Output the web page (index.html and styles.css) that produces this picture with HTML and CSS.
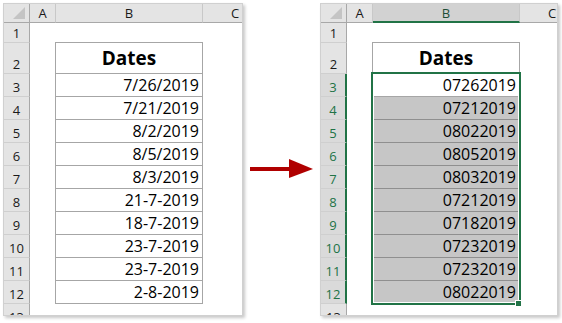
FILE: index.html
```html
<!DOCTYPE html>
<html>
<head>
<meta charset="utf-8">
<link rel="stylesheet" href="styles.css">
</head>
<body>
<div class="stage">
  <div class="sheet left">
    <div class="corner"><svg width="25" height="18" viewBox="0 0 25 18"><polygon points="21,3 21,15 9,15" fill="#c4c4c4"/></svg></div>
    <div class="ch">A</div>
    <div class="ch">B</div>
    <div class="ch chc"><span>C</span></div>

    <div class="rh">1</div><div class="c"></div><div class="c"></div><div class="c"></div>
    <div class="rh">2</div><div class="c"></div><div class="c t top head">Dates</div><div class="c"></div>
    <div class="rh">3</div><div class="c"></div><div class="c t">7/26/2019</div><div class="c"></div>
    <div class="rh">4</div><div class="c"></div><div class="c t">7/21/2019</div><div class="c"></div>
    <div class="rh">5</div><div class="c"></div><div class="c t">8/2/2019</div><div class="c"></div>
    <div class="rh">6</div><div class="c"></div><div class="c t">8/5/2019</div><div class="c"></div>
    <div class="rh">7</div><div class="c"></div><div class="c t">8/3/2019</div><div class="c"></div>
    <div class="rh">8</div><div class="c"></div><div class="c t">21-7-2019</div><div class="c"></div>
    <div class="rh">9</div><div class="c"></div><div class="c t">18-7-2019</div><div class="c"></div>
    <div class="rh">10</div><div class="c"></div><div class="c t">23-7-2019</div><div class="c"></div>
    <div class="rh">11</div><div class="c"></div><div class="c t">23-7-2019</div><div class="c"></div>
    <div class="rh">12</div><div class="c"></div><div class="c t">2-8-2019</div><div class="c"></div>
    <div class="rh">13</div><div class="c"></div><div class="c"></div><div class="c"></div>
  </div>

  <div class="arrow-wrap">
    <svg width="64" height="20" viewBox="0 0 64 20"><rect x="0" y="8" width="42" height="4" fill="#b00000"/><polygon points="39,0 63,10 39,19" fill="#b00000"/></svg>
  </div>

  <div class="sheet right">
    <div class="corner"><svg width="25" height="18" viewBox="0 0 25 18"><polygon points="21,3 21,15 9,15" fill="#c4c4c4"/></svg></div>
    <div class="ch">A</div>
    <div class="ch sel-col">B</div>
    <div class="ch chc"><span>C</span></div>

    <div class="rh">1</div><div class="c"></div><div class="c"></div><div class="c"></div>
    <div class="rh">2</div><div class="c"></div><div class="c t top head">Dates</div><div class="c"></div>
    <div class="rh sel-row">3</div><div class="c"></div><div class="c t">07262019</div><div class="c"></div>
    <div class="rh sel-row">4</div><div class="c"></div><div class="c t g">07212019</div><div class="c"></div>
    <div class="rh sel-row">5</div><div class="c"></div><div class="c t g">08022019</div><div class="c"></div>
    <div class="rh sel-row">6</div><div class="c"></div><div class="c t g">08052019</div><div class="c"></div>
    <div class="rh sel-row">7</div><div class="c"></div><div class="c t g">08032019</div><div class="c"></div>
    <div class="rh sel-row">8</div><div class="c"></div><div class="c t g">07212019</div><div class="c"></div>
    <div class="rh sel-row">9</div><div class="c"></div><div class="c t g">07182019</div><div class="c"></div>
    <div class="rh sel-row">10</div><div class="c"></div><div class="c t g">07232019</div><div class="c"></div>
    <div class="rh sel-row">11</div><div class="c"></div><div class="c t g">07232019</div><div class="c"></div>
    <div class="rh sel-row">12</div><div class="c"></div><div class="c t g">08022019</div><div class="c"></div>
    <div class="rh">13</div><div class="c"></div><div class="c"></div><div class="c"></div>

    <div class="selection"><div class="handle"></div></div>
  </div>
</div>
</body>
</html>
```

FILE: styles.css
```css
* { box-sizing: border-box; }
html, body { margin: 0; padding: 0; background: #ffffff; }
body { width: 562px; height: 323px; overflow: hidden; font-family: "Open Sans", "DejaVu Sans", sans-serif; }

.stage {
  display: flex;
  align-items: flex-start;
  padding: 3px 0 0 3px;
}

.sheet {
  position: relative;
  display: grid;
  grid-template-columns: 26px 26px 147px 1fr;
  grid-template-rows: 19px 20px 31px repeat(10, 23px) 23px;
  height: 313px;
  overflow: hidden;
  background: #ffffff;
  border: 1px solid #d0d0d0;
  box-shadow: 2px 2px 3px rgba(0, 0, 0, 0.22);
}
.left { width: 240px; }
.right { width: 238px; }

.arrow-wrap {
  width: 77px;
  padding: 156px 0 0 7px;
  display: flex;
}
.arrow-wrap svg { display: block; }

.corner {
  background: #e4e4e4;
  border-right: 1px solid #a8a8a8;
  border-bottom: 1px solid #a8a8a8;
}
.corner svg { display: block; }

.ch {
  background: #e4e4e4;
  border-right: 1px solid #c8c8c8;
  border-bottom: 1px solid #a8a8a8;
  font-size: 13px;
  line-height: 18px;
  color: #1a1a1a;
  text-align: center;
  overflow: hidden;
}
.chc { border-right: none; }
.chc span { display: block; width: 64px; text-align: center; }

.sel-col {
  background: #d2d2d2;
  border-bottom: 2px solid #217346;
  color: #1f4e36;
}

.rh {
  background: #e4e4e4;
  border-right: 1px solid #a8a8a8;
  border-bottom: 1px solid #cfcfcf;
  font-size: 13px;
  line-height: 16px;
  color: #1a1a1a;
  display: flex;
  align-items: flex-end;
  justify-content: center;
  padding-bottom: 1px;
}
.sel-row {
  background: #dadada;
  color: #217346;
  border-right: 2px solid #217346;
}

.c { background: #ffffff; }

.t {
  margin-left: -1px;
  border-left: 1px solid #a6a6a6;
  border-right: 1px solid #a6a6a6;
  border-bottom: 1px solid #a6a6a6;
  font-size: 16px;
  line-height: 20px;
  color: #000000;
  display: flex;
  align-items: flex-end;
  justify-content: flex-end;
  padding: 0 3px 1px 0;
}
.top {
  margin-top: -1px;
  border-top: 1px solid #a6a6a6;
}
.head {
  justify-content: center;
  font-weight: 700;
  font-size: 19px;
  line-height: 24px;
  padding: 0 0 3px 0;
}
.g {
  background: #c6c6c6;
  border-bottom-color: #8f8f8f;
}

.selection {
  position: absolute;
  grid-column: 3 / 4;
  grid-row: 4 / 14;
  top: -2px;
  right: -1px;
  bottom: -1px;
  left: -2px;
  border: 2px solid #217346;
  box-shadow: inset 0 0 0 1px #ffffff;
  pointer-events: none;
}
.handle {
  position: absolute;
  right: -3px;
  bottom: -4px;
  width: 7px;
  height: 7px;
  background: #217346;
  border: 1px solid #ffffff;
}
```
